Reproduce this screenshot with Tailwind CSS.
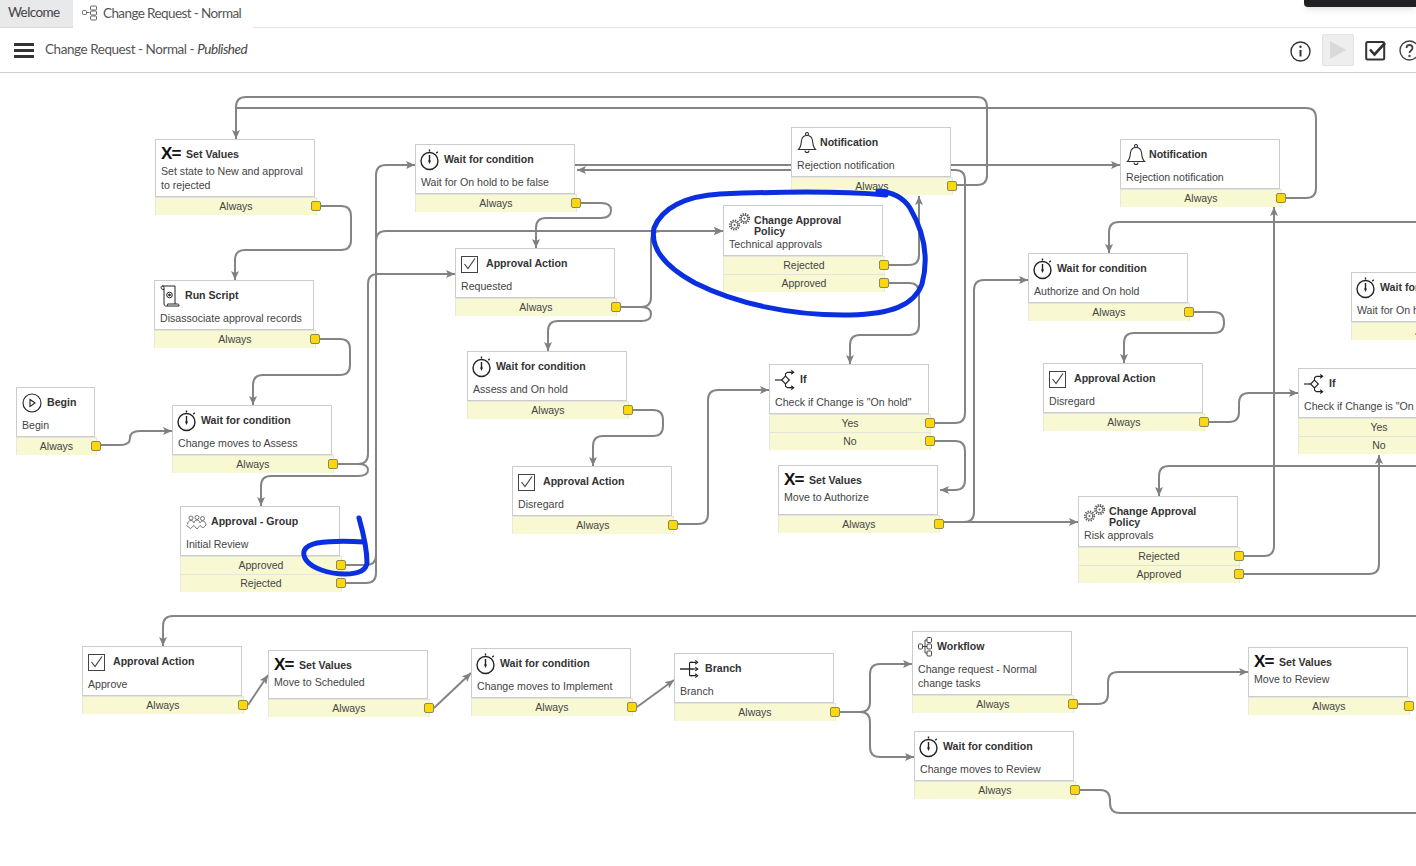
<!DOCTYPE html>
<html lang="en">
<head>
  <meta charset="UTF-8" />
  <title>Change Request - Normal</title>
  <script src="https://cdn.jsdelivr.net/npm/@tailwindcss/browser@4"></script>
</head>
<body class="bg-white w-[1416px] h-[866px] overflow-hidden flex flex-col font-['Lato',sans-serif] text-[#444]">

  <!-- tabs -->
  <div class="h-[28px] flex relative shrink-0">
    <div class="w-[73px] h-[28px] bg-[#e7e9eb] border-b border-[#d8d8d8] flex items-center pl-2 pb-[2px] text-[13.500px] tracking-[-0.6px] text-[#444]">Welcome</div>
    <div class="w-[180px] flex items-center pl-[9px] pb-[2px] gap-[5px] text-[13.500px] tracking-[-0.600px] text-[#555] whitespace-nowrap">
      <svg width="16" height="16" viewBox="0 0 16 16" fill="none" stroke="#666" stroke-width="1"><rect x="0.500" y="5.500" width="4" height="4" rx="1"/><path d="M4.500 7.500h3"/><rect x="8.500" y="1" width="6" height="4" rx="1"/><rect x="8.500" y="6" width="6" height="4" rx="1"/><rect x="8.500" y="11" width="6" height="4" rx="1"/></svg>
      <span>Change Request - Normal</span>
    </div>
    <div class="flex-1 border-b border-[#e4e4e4]"></div>
    <div class="absolute right-0 top-0 w-[112px] h-[7px] bg-[#1f2024] rounded-bl-[4px] shadow-md"></div>
  </div>

  <!-- toolbar -->
  <div class="h-[45px] shrink-0 border-b border-[#cfcfcf] flex items-center pl-[14px] relative overflow-hidden">
    <div class="w-[20px] flex flex-col gap-[3px]">
      <div class="h-[3px] bg-[#333]"></div>
      <div class="h-[3px] bg-[#333]"></div>
      <div class="h-[3px] bg-[#333]"></div>
    </div>
    <div class="ml-[11px] pb-[1px] text-[13.500px] tracking-[-0.450px] text-[#555] whitespace-nowrap">Change Request - Normal - <em class="text-[#444]">Published</em></div>
    <div class="absolute left-[1290px] top-[6px] h-[32px] flex items-center">
      <svg class="mt-[2px]" width="21" height="21" viewBox="0 0 21 21" fill="none" stroke="#333" stroke-width="1.400"><circle cx="10.500" cy="10.500" r="9.500"/><path d="M10.500 9v6.500" stroke-width="2"/><circle cx="10.500" cy="5.800" r="0.600" stroke-width="1.200"/></svg>
      <div class="ml-[11px] w-[32px] h-[32px] bg-[#eeeeee] border border-[#e2e2e2] rounded-[2px] flex items-center justify-center">
        <svg width="16" height="18" viewBox="0 0 16 18"><path d="M0 0l16 9L0 18z" fill="#d9d9d9"/></svg>
      </div>
      <svg class="ml-[11px]" width="22" height="21" viewBox="0 0 22 21" fill="none" stroke="#333"><rect x="1.200" y="2" width="18" height="17.500" rx="1.500" stroke-width="2"/><path d="M5 9.500l4.500 5L20 3" stroke-width="2.600"/></svg>
      <svg class="ml-[12px]" width="21" height="21" viewBox="0 0 21 21" fill="none" stroke="#444" stroke-width="1.400"><circle cx="10.500" cy="10.500" r="9.500"/><path d="M7.500 8c0-4 6-4 6 0 0 2.500-3 2.500-3 5" stroke-width="1.800"/><circle cx="10.500" cy="16" r="0.500"/></svg>
    </div>
  </div>

  <!-- canvas -->
  <div id="canvas" class="flex-1 relative overflow-hidden font-['Liberation_Sans',sans-serif]">
    <svg class="absolute left-0 top-0" width="1416" height="793" viewBox="0 73 1416 793" fill="none" stroke="#848484" stroke-width="2">
      <defs>
        <marker id="arr" markerUnits="userSpaceOnUse" markerWidth="10" markerHeight="8" refX="9" refY="4" orient="auto"><path d="M0 0l9 4-9 4 2-4z" fill="#808080" stroke="none"/></marker>
      </defs>
      <path marker-end="url(#arr)" d="M321 206H341Q351 206 351 216V240Q351 250 341 250H245Q235 250 235 260V280"/>
      <path marker-end="url(#arr)" d="M320 339H340Q350 339 350 349V365Q350 375 340 375H263Q253 375 253 385V405"/>
      <path marker-end="url(#arr)" d="M100 445H120Q130 445 130 438Q130 431 140 431H172"/>
      <path marker-end="url(#arr)" d="M338 464H358Q368 464 368 454V284Q368 274 378 274H455"/>
      <path marker-end="url(#arr)" d="M338 464H358Q368 464 368 470Q368 476 358 476H271Q261 476 261 486V506"/>
      <path marker-end="url(#arr)" d="M346 565H366Q376 565 376 555V175Q376 165 386 165H415"/>
      <path marker-end="url(#arr)" d="M346 583H366Q376 583 376 573V241Q376 231 386 231H723"/>
      <path marker-end="url(#arr)" d="M581 203H601Q611 203 611 210Q611 218 601 218H546Q536 218 536 228V248"/>
      <path marker-end="url(#arr)" d="M621 307H641Q651 307 651 297V241Q651 231 661 231H723"/>
      <path marker-end="url(#arr)" d="M621 307H641Q651 307 651 314Q651 321 641 321H558Q548 321 548 331V351"/>
      <path marker-end="url(#arr)" d="M633 410H653Q663 410 663 420V426Q663 436 653 436H603Q593 436 593 446V466"/>
      <path marker-end="url(#arr)" d="M678 524H698Q708 524 708 514V400Q708 390 718 390H769"/>
      <path marker-end="url(#arr)" d="M889 265H909Q919 265 919 255V196"/>
      <path marker-end="url(#arr)" d="M889 283H909Q919 283 919 293V325Q919 335 909 335H860Q850 335 850 345V364"/>
      <path marker-end="url(#arr)" d="M935 423H955Q965 423 965 413V180Q965 170 955 170H577"/>
      <path marker-end="url(#arr)" d="M575 165H1120"/>
      <path marker-end="url(#arr)" d="M957 185H977Q987 185 987 175V107Q987 97 977 97H246Q236 97 236 107V139"/>
      <path d="M1286 198H1306Q1316 198 1316 188V118Q1316 108 1306 108H236"/>
      <path marker-end="url(#arr)" d="M935 441H955Q965 441 965 451V480Q965 490 955 490H940"/>
      <path marker-end="url(#arr)" d="M944 522H964Q974 522 974 512V290Q974 280 984 280H1028"/>
      <path marker-end="url(#arr)" d="M944 522H1078"/>
      <path marker-end="url(#arr)" d="M1194 312H1214Q1224 312 1224 322V323Q1224 333 1214 333H1134Q1124 333 1124 343V363"/>
      <path marker-end="url(#arr)" d="M1209 422H1229Q1239 422 1239 412V403Q1239 393 1249 393H1298"/>
      <path marker-end="url(#arr)" d="M1244 556H1264Q1274 556 1274 546V207"/>
      <path marker-end="url(#arr)" d="M1244 574H1369Q1379 574 1379 564V455"/>
      <path marker-end="url(#arr)" d="M1416 222H1119Q1109 222 1109 232V253"/>
      <path marker-end="url(#arr)" d="M1416 466H1169Q1159 466 1159 476V496"/>
      <path marker-end="url(#arr)" d="M1416 616H173Q163 616 163 626V646"/>
      <path marker-end="url(#arr)" d="M248 705L268 675"/>
      <path marker-end="url(#arr)" d="M434 708L471 673"/>
      <path marker-end="url(#arr)" d="M637 707L674 680"/>
      <path marker-end="url(#arr)" d="M840 712H860Q870 712 870 702V674Q870 664 880 664H912"/>
      <path marker-end="url(#arr)" d="M840 712H860Q870 712 870 722V747Q870 757 880 757H914"/>
      <path marker-end="url(#arr)" d="M1078 704H1098Q1108 704 1108 694V682Q1108 672 1118 672H1248"/>
      <path d="M1080 790H1100Q1110 790 1110 800V803Q1110 813 1120 813H1416"/>
    </svg>

    <div id="nodes"></div>

    <!-- pen marks drawn over the screenshot -->
    <svg class="absolute left-0 top-0 pointer-events-none" width="1416" height="793" viewBox="0 73 1416 793" fill="none" stroke="#0a2fe0" stroke-width="5" stroke-linecap="round" stroke-linejoin="round">
      <path d="M886 195C840 191 770 192 720 194C685 196 662 208 654 228C650 248 664 266 695 283C735 303 790 316 850 315C890 314 914 306 922 284C929 258 924 232 910 208C903 197 893 192 878 191"/>
      <path d="M359 518C363 532 367 550 367 563C366 571 358 574 345 574C328 574 312 568 306 560C301 552 304 546 317 543C330 541 348 541 364 542"/>
    </svg>
  </div>

  <script>
    const icons = {
      timer: '<svg width="20" height="22" viewBox="0 0 20 22" fill="none" stroke="#222" stroke-width="1.400"><circle cx="9.500" cy="12" r="8.500"/><path d="M9.500 0.500v2M9.500 6v6" /><path d="M8 11.500l1.500 3.500 1.500-3.500z" fill="#222" stroke="none"/><path d="M16.500 3l1 1" stroke-width="2"/></svg>',
      bell: '<svg width="20" height="22" viewBox="0 0 20 22" fill="none" stroke="#333" stroke-width="1.100"><circle cx="10" cy="2" r="1.500"/><path d="M1.500 17.500c2.500-2.500 2.500-5 3-9 .5-3 2.500-5 5.500-5s5 2 5.500 5c.5 4 .5 6.500 3 9z"/><path d="M8 18.500a2 2 0 0 0 4 0"/></svg>',
      gears: '<svg width="22" height="20" viewBox="0 0 22 20" fill="none" stroke="#555"><circle cx="6.500" cy="13" r="4.700" stroke-width="1.800" stroke-dasharray="1.300 1.150"/><circle cx="6.500" cy="13" r="3.300" stroke-width="0.900"/><circle cx="6.500" cy="13" r="1" fill="#555" stroke="none"/><circle cx="16.500" cy="6.500" r="4.700" stroke-width="1.800" stroke-dasharray="1.300 1.150"/><circle cx="16.500" cy="6.500" r="3.300" stroke-width="0.900"/><circle cx="16.500" cy="6.500" r="1" fill="#555" stroke="none"/></svg>',
      check: '<svg width="17" height="17" viewBox="0 0 17 17" fill="none" stroke="#444"><rect x="0.500" y="0.500" width="16" height="16" stroke-width="1"/><path d="M3.500 8l3.500 4.500 7-10" stroke-width="1.200"/></svg>',
      script: '<svg width="20" height="22" viewBox="0 0 20 22" fill="none" stroke="#222" stroke-width="1"><path d="M1 2.500c0-2 3-2 3 0V19c0 2 2 2.500 3 2h12c.5-1.500-1-2-1-2H7.500c0 1 0 2-.5 2"/><path d="M1 2.500c0 1.500 1.500 2 3 2M2 1h13v18"/><circle cx="9.500" cy="10" r="2.800"/><circle cx="9.500" cy="10" r="0.900" fill="#222"/></svg>',
      group: '<svg width="21" height="15" viewBox="0 0 21 15" fill="none" stroke="#555" stroke-width="0.800"><circle cx="5" cy="3" r="2"/><circle cx="11" cy="2.500" r="2"/><circle cx="16.500" cy="3.500" r="2"/><path d="M1.500 9.500c0-2.500 1.500-4 3.500-4 1.500 0 2.500 1 3 2.500M8 8c.3-2 1.500-3 3-3s2.800 1 3 3M14 8c.5-1.500 1.500-2 2.500-2 2 0 3.500 1.500 3.500 4"/><path d="M0.500 10.500l4 3 3.500-3 3 3.500 3-3.500 3 2.500 3-3"/></svg>',
      ifnode: '<svg width="22" height="22" viewBox="0 0 22 22" fill="none" stroke="#222" stroke-width="1.200"><path d="M0 11h7"/><path d="M11 7l4 4-4 4-4-4z"/><path d="M11 7V4.500l2-1.500h6M11 15v2.500l2 1.500h6"/><path d="M17 1l2.500 2L17 5M17 17l2.500 2-2.500 2"/></svg>',
      branch: '<svg width="22" height="20" viewBox="0 0 22 20" fill="none" stroke="#222" stroke-width="1.200"><path d="M0 10h14" stroke-width="1.500"/><path d="M13 3h-2.500c-.5 0-.5.500-.5 1v12c0 .5 0 1 .5 1H13"/><path d="M13 10h6M11 3h6M11 17h6"/><path d="M16 1l2.500 2L16 5M16 8l2.500 2-2.500 2M16 15l2.500 2-2.500 2"/></svg>',
      workflow: '<svg width="15" height="20" viewBox="0 0 15 20" fill="none" stroke="#333" stroke-width="0.900"><rect x="0.500" y="7" width="4" height="5" rx="1"/><path d="M4.500 9.500H7"/><rect x="9" y="0.500" width="4.500" height="5" rx="1"/><rect x="9" y="7" width="4.500" height="5" rx="1"/><rect x="9" y="14" width="4.500" height="5" rx="1"/><path d="M7 3v13h2M7 3h2M7 9.500h2"/></svg>',
      play: '<svg width="20" height="20" viewBox="0 0 20 20" fill="none" stroke="#222" stroke-width="1.100"><circle cx="10" cy="10" r="9"/><path d="M8 6.500l5 3.500-5 3.500z"/></svg>',
      setval: '<span class="font-bold text-[17px] leading-[17px] text-[#111] tracking-[-0.800px]">X=</span>'
    };

    // x, y and h are the white box in screen coordinates
    const nodes = [
      { x: 155, y: 139, h: 58, icon: 'setval', title: 'Set Values', sub: 'Set state to New and approval<br>to rejected', rows: ['Always'] },
      { x: 415, y: 144, h: 50, icon: 'timer', title: 'Wait for condition', sub: 'Wait for On hold to be false', rows: ['Always'] },
      { x: 791, y: 127, h: 50, icon: 'bell', title: 'Notification', sub: 'Rejection notification', rows: ['Always'] },
      { x: 1120, y: 139, h: 50, icon: 'bell', title: 'Notification', sub: 'Rejection notification', rows: ['Always'] },
      { x: 723, y: 205, h: 51, icon: 'gears', title: 'Change Approval<br>Policy', sub: 'Technical approvals', rows: ['Rejected', 'Approved'] },
      { x: 455, y: 248, h: 50, icon: 'check', title: 'Approval Action', sub: 'Requested', rows: ['Always'] },
      { x: 154, y: 280, h: 50, icon: 'script', title: 'Run Script', sub: 'Disassociate approval records', rows: ['Always'] },
      { x: 1028, y: 253, h: 50, icon: 'timer', title: 'Wait for condition', sub: 'Authorize and On hold', rows: ['Always'] },
      { x: 1351, y: 272, h: 50, icon: 'timer', title: 'Wait for condition', sub: 'Wait for On hold to be false', rows: ['Always'] },
      { x: 467, y: 351, h: 50, icon: 'timer', title: 'Wait for condition', sub: 'Assess and On hold', rows: ['Always'] },
      { x: 769, y: 364, h: 50, icon: 'ifnode', title: 'If', sub: 'Check if Change is "On hold"', rows: ['Yes', 'No'] },
      { x: 1043, y: 363, h: 50, icon: 'check', title: 'Approval Action', sub: 'Disregard', rows: ['Always'] },
      { x: 1298, y: 368, h: 50, icon: 'ifnode', title: 'If', sub: 'Check if Change is "On hold"', rows: ['Yes', 'No'] },
      { x: 16, y: 387, h: 50, w: 79, icon: 'play', title: 'Begin', sub: 'Begin', rows: ['Always'] },
      { x: 172, y: 405, h: 50, icon: 'timer', title: 'Wait for condition', sub: 'Change moves to Assess', rows: ['Always'] },
      { x: 512, y: 466, h: 50, icon: 'check', title: 'Approval Action', sub: 'Disregard', rows: ['Always'] },
      { x: 778, y: 465, h: 50, icon: 'setval', title: 'Set Values', sub: 'Move to Authorize', rows: ['Always'] },
      { x: 1078, y: 496, h: 51, icon: 'gears', title: 'Change Approval<br>Policy', sub: 'Risk approvals', rows: ['Rejected', 'Approved'] },
      { x: 180, y: 506, h: 50, icon: 'group', title: 'Approval - Group', sub: 'Initial Review', rows: ['Approved', 'Rejected'] },
      { x: 82, y: 646, h: 50, icon: 'check', title: 'Approval Action', sub: 'Approve', rows: ['Always'] },
      { x: 268, y: 650, h: 49, icon: 'setval', title: 'Set Values', sub: 'Move to Scheduled', rows: ['Always'] },
      { x: 471, y: 648, h: 50, icon: 'timer', title: 'Wait for condition', sub: 'Change moves to Implement', rows: ['Always'] },
      { x: 674, y: 653, h: 50, icon: 'branch', title: 'Branch', sub: 'Branch', rows: ['Always'] },
      { x: 912, y: 631, h: 64, icon: 'workflow', title: 'Workflow', sub: 'Change request - Normal<br>change tasks', rows: ['Always'] },
      { x: 1248, y: 647, h: 50, icon: 'setval', title: 'Set Values', sub: 'Move to Review', rows: ['Always'] },
      { x: 914, y: 731, h: 50, icon: 'timer', title: 'Wait for condition', sub: 'Change moves to Review', rows: ['Always'] }
    ];

    const rowHtml = label => `
      <div class="relative h-[18px] -mr-[2px] bg-[#f8f8d3] border-t border-[#e4e4dc] border-x border-x-[#e8e8dc] flex items-center justify-center text-[10.500px] text-[#444]">
        ${label}
        <div class="absolute right-[-5px] top-[3px] w-[10px] h-[10px] bg-[#fbd70b] border border-[#8b8b55] rounded-[2px]"></div>
      </div>`;

    const headClass = {
      setval: 'h-[24px] pt-[3px] gap-[5px] items-center',
      gears: 'h-[31px] pt-[8px] gap-[4px] items-center',
      workflow: 'h-[30px] gap-[4px] items-center'
    };
    const titleClass = { setval: 'mt-[2px]', gears: '' };
    const iconBox = {
      setval: 'w-[20px]',
      gears: 'w-[22px] -mt-[8px] -ml-[1px]',
      workflow: 'w-[15px]',
      timer: 'w-[20px] -ml-[1px]',
      bell: 'w-[20px] -mr-[1px]',
      check: 'w-[21px]',
      ifnode: 'w-[21px]',
      branch: 'w-[21px]',
      group: 'w-[21px]',
      script: 'w-[21px]',
      play: 'w-[21px]'
    };

    document.getElementById('nodes').innerHTML = nodes.map(n => `
      <div class="absolute" style="left:${n.x}px;top:${n.y - 73}px;width:${n.w || 160}px">
        <div class="bg-white border border-[#cccccc] px-[5px] overflow-hidden" style="height:${n.h}px">
          <div class="flex ${headClass[n.icon] || 'h-[30px] gap-[4px] items-center'}">
            <div class="shrink-0 flex items-center ${iconBox[n.icon]}">${icons[n.icon]}</div>
            <div class="font-bold text-[10.600px] leading-[11px] text-[#333] whitespace-nowrap ${n.icon in titleClass ? titleClass[n.icon] : '-mt-[2px]'}">${n.title}</div>
          </div>
          <div class="text-[10.600px] leading-[14px] text-[#444] whitespace-nowrap">${n.sub}</div>
        </div>
        ${n.rows.map(rowHtml).join('')}
      </div>`).join('');
  </script>
</body>
</html>
